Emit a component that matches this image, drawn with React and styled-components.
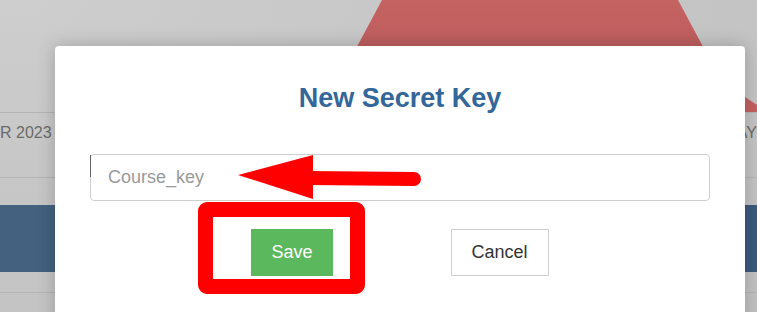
import React from 'react';
import styled, { createGlobalStyle } from 'styled-components';

const GlobalStyle = createGlobalStyle`
  html, body {
    margin: 0;
    padding: 0;
    overflow: hidden;
  }
  body {
    font-family: "Liberation Sans", Arial, sans-serif;
  }
`;

const Page = styled.div`
  position: relative;
  width: 757px;
  height: 312px;
  overflow: hidden;
  background: radial-gradient(ellipse at 0% 0%, #cecece 0%, #c6c6c6 45%, #c2c2c2 100%);
`;

const Hero = styled.div`
  height: 112px;
  border-bottom: 1px solid #b4b4b4;
  svg {
    display: block;
  }
`;

const Row = styled.div`
  display: flex;
  justify-content: space-between;
  align-items: flex-start;
  box-sizing: border-box;
  height: ${(p) => p.$h}px;
  padding-top: ${(p) => p.$pad || 0}px;
  border-bottom: ${(p) => (p.$line ? '1px solid #b4b4b4' : 'none')};
  background: ${(p) => (p.$dark ? 'linear-gradient(90deg, #44627f, #3c5a7b)' : 'transparent')};
  color: #6b6b6b;
  font-size: 16px;
`;

const Modal = styled.div`
  position: absolute;
  top: 46px;
  left: 55px;
  width: 690px;
  height: 300px;
  box-sizing: border-box;
  padding: 37px 35px 0 35px;
  background: #fff;
  border-radius: 4px;
  box-shadow: 0 0 18px rgba(0, 0, 0, 0.22);
`;

const Title = styled.h2`
  margin: 0;
  text-align: center;
  font-size: 27px;
  line-height: 31px;
  font-weight: 700;
  color: #33679a;
`;

const Field = styled.div`
  position: relative;
  margin-top: 40px;

  &::before {
    content: '';
    position: absolute;
    left: 0;
    top: 1px;
    width: 1px;
    height: 22px;
    background: #666;
  }
`;

const Input = styled.input`
  display: block;
  width: 100%;
  height: 47px;
  box-sizing: border-box;
  padding: 0 17px;
  border: 1px solid #cfcfcf;
  border-radius: 4px;
  font-family: inherit;
  font-size: 18px;
  color: #555;
  outline: none;

  &::placeholder {
    color: #9a9a9a;
  }
`;

const Arrow = styled.svg`
  position: absolute;
  left: 148px;
  top: 0;
`;

const Actions = styled.div`
  display: flex;
  justify-content: center;
  gap: 118px;
  margin-top: 28px;
`;

const SaveSlot = styled.div`
  position: relative;
`;

const Highlight = styled.div`
  position: absolute;
  left: -53px;
  top: -27px;
  width: 167px;
  height: 92px;
  box-sizing: border-box;
  border: 15px solid #ff0000;
  border-radius: 9px;
  pointer-events: none;
`;

const Button = styled.button`
  height: 47px;
  padding: 0 20px;
  box-sizing: border-box;
  font-family: inherit;
  font-size: 18px;
  border-radius: 0;
  cursor: pointer;
  background: ${(p) => (p.$primary ? '#5cb85c' : '#fff')};
  color: ${(p) => (p.$primary ? '#fff' : '#333')};
  border: ${(p) => (p.$primary ? 'none' : '1px solid #cfcfcf')};
`;

export default function App() {
  return (
    <>
      <GlobalStyle />
      <Page>
        <Hero>
          <svg width="757" height="112" viewBox="0 0 757 112">
            <defs>
              <linearGradient id="redFill" x1="0" y1="0" x2="0" y2="1">
                <stop offset="0" stopColor="#c56262" />
                <stop offset="1" stopColor="#b55858" />
              </linearGradient>
            </defs>
            <polygon points="382,0 678,0 738,112 322,112" fill="url(#redFill)" />
            <polygon points="745,97 757,105 757,112 745,112" fill="#c46060" />
          </svg>
        </Hero>
        <Row $h={65} $pad={11} $line>
          <span>R 2023</span>
          <span>DAY</span>
        </Row>
        <Row $h={27} />
        <Row $h={67} $dark />
        <Row $h={21} $line />
        <Row $h={20} />

        <Modal>
          <Title>New Secret Key</Title>
          <Field>
            <Input placeholder="Course_key" />
            <Arrow width="190" height="46" viewBox="0 0 190 46">
              <polygon points="0,21 75,1 75,45" fill="#ff0000" />
              <line x1="70" y1="24" x2="176" y2="25" stroke="#ff0000" strokeWidth="14" strokeLinecap="round" />
            </Arrow>
          </Field>
          <Actions>
            <SaveSlot>
              <Button $primary>Save</Button>
              <Highlight />
            </SaveSlot>
            <Button>Cancel</Button>
          </Actions>
        </Modal>
      </Page>
    </>
  );
}
